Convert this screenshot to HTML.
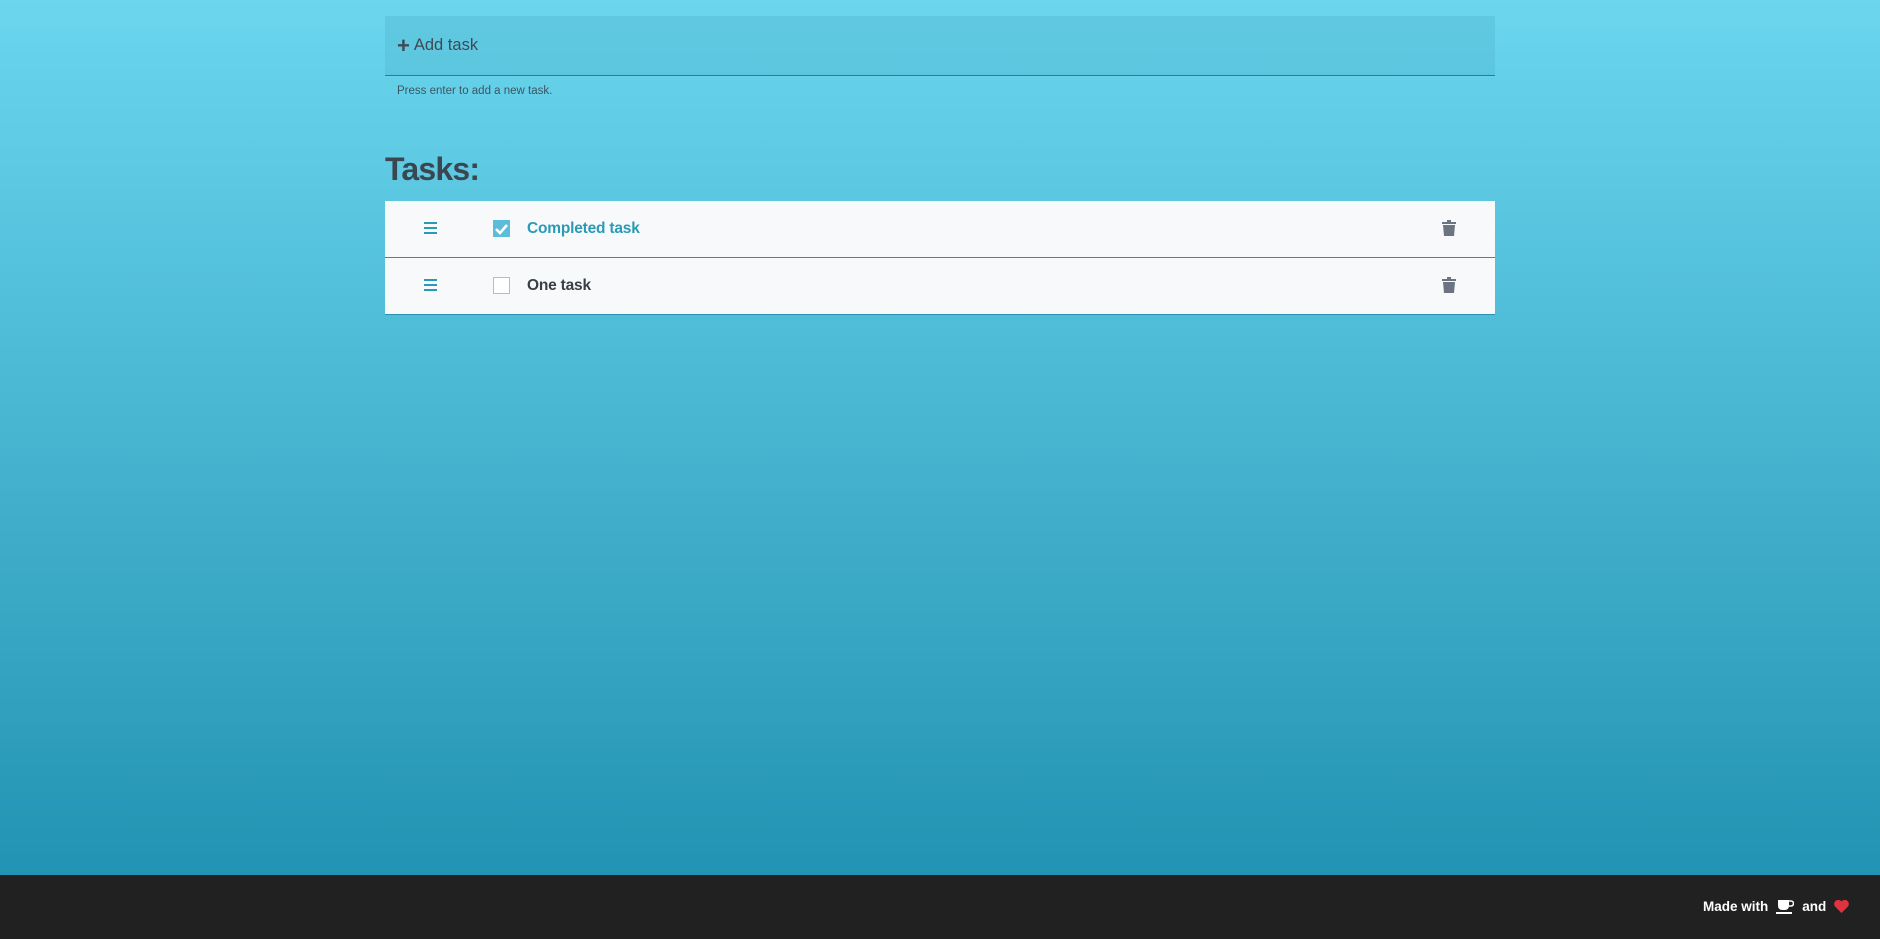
<!DOCTYPE html>
<html><head><style>
*{margin:0;padding:0;box-sizing:border-box}
html,body{width:1880px;height:939px;overflow:hidden;font-family:"Liberation Sans",sans-serif}
body{background:linear-gradient(#6bd6ee,#2393b3 875px);position:relative}
.wrap{position:absolute;left:385px;width:1110px;top:16px}
.input{height:60px;background:rgba(80,180,205,.35);border-bottom:1px solid #2b7d93;display:flex;align-items:center;padding-left:12px;font-size:16.5px;color:#3e4a55}
.help{font-size:11.5px;color:#3e5560;padding:9px 12px}
h1{position:absolute;top:151px;left:385px;font-size:32px;color:#3a4650;font-weight:bold;letter-spacing:-0.8px}
.row{position:absolute;left:385px;width:1110px;height:57px;background:#f7f9fb;border-bottom:1px solid #2a8fb0;}
.ham{position:absolute;left:39px;top:21px;width:13px;height:12px;border-top:2.5px solid #2a9ab5;border-bottom:2.5px solid #2a9ab5}
.ham:after{content:"";position:absolute;left:0;right:0;top:2.5px;height:2.5px;background:#2a9ab5}
.cb{position:absolute;left:108px;top:19px;width:17px;height:17px;border:1px solid #bbb;background:#fff}
.cb.on{background:#5bbdd9;border-color:#5bbdd9}
.txt{position:absolute;left:142px;top:19px;font-size:15.5px;font-weight:bold;color:#3a3f45;letter-spacing:-0.2px}
.trash{position:absolute;left:1057px;top:19px}
footer{position:absolute;left:0;top:875px;width:1880px;height:64px;background:#212121;color:#fff;font-size:13.5px;font-weight:bold}
footer span{position:absolute;left:1703px;top:24px;display:flex;align-items:center;gap:8px}
</style></head><body>
<div class="wrap">
<div class="input"><span style="font-size:22px;font-weight:bold;margin-right:4px;color:#3e4a55">+</span>Add task</div>
<div class="help">Press enter to add a new task.</div>
</div>
<h1>Tasks:</h1>
<div class="row" style="top:201px"><div class="ham"></div><div class="cb on"><svg width="17" height="17" viewBox="0 0 17 17" style="position:absolute;left:-1px;top:-1px"><path d="M3 9l4 4 7-8" stroke="#fff" stroke-width="2.6" fill="none"/></svg></div><div class="txt" style="color:#2a9ab5">Completed task</div>
<svg class="trash" width="14" height="17" viewBox="0 0 14 17"><rect x="0" y="2" width="14" height="2" fill="#6b7480"/><rect x="5" y="0" width="4" height="2" fill="#6b7480"/><path d="M1 5h12l-1 11H2z" fill="#6b7480"/></svg></div>
<div class="row" style="top:258px"><div class="ham"></div><div class="cb"></div><div class="txt">One task</div>
<svg class="trash" width="14" height="17" viewBox="0 0 14 17"><rect x="0" y="2" width="14" height="2" fill="#6b7480"/><rect x="5" y="0" width="4" height="2" fill="#6b7480"/><path d="M1 5h12l-1 11H2z" fill="#6b7480"/></svg></div>
<footer><span>Made with <svg width="18" height="14" viewBox="0 0 18 14"><path d="M2 0h11v6a4 4 0 0 1-4 4H6a4 4 0 0 1-4-4z" fill="#fff"/><path d="M13 1h2a2 2 0 0 1 0 5h-2" stroke="#fff" stroke-width="1.6" fill="none"/><rect x="0" y="12" width="16" height="2" fill="#fff"/></svg> and <svg width="15" height="13" viewBox="0 0 15 13"><path d="M7.5 13L1 6.5A3.5 3.5 0 0 1 7.5 1.5 3.5 3.5 0 0 1 14 6.5z" fill="#e0323f"/></svg></span></footer>
</body></html>
